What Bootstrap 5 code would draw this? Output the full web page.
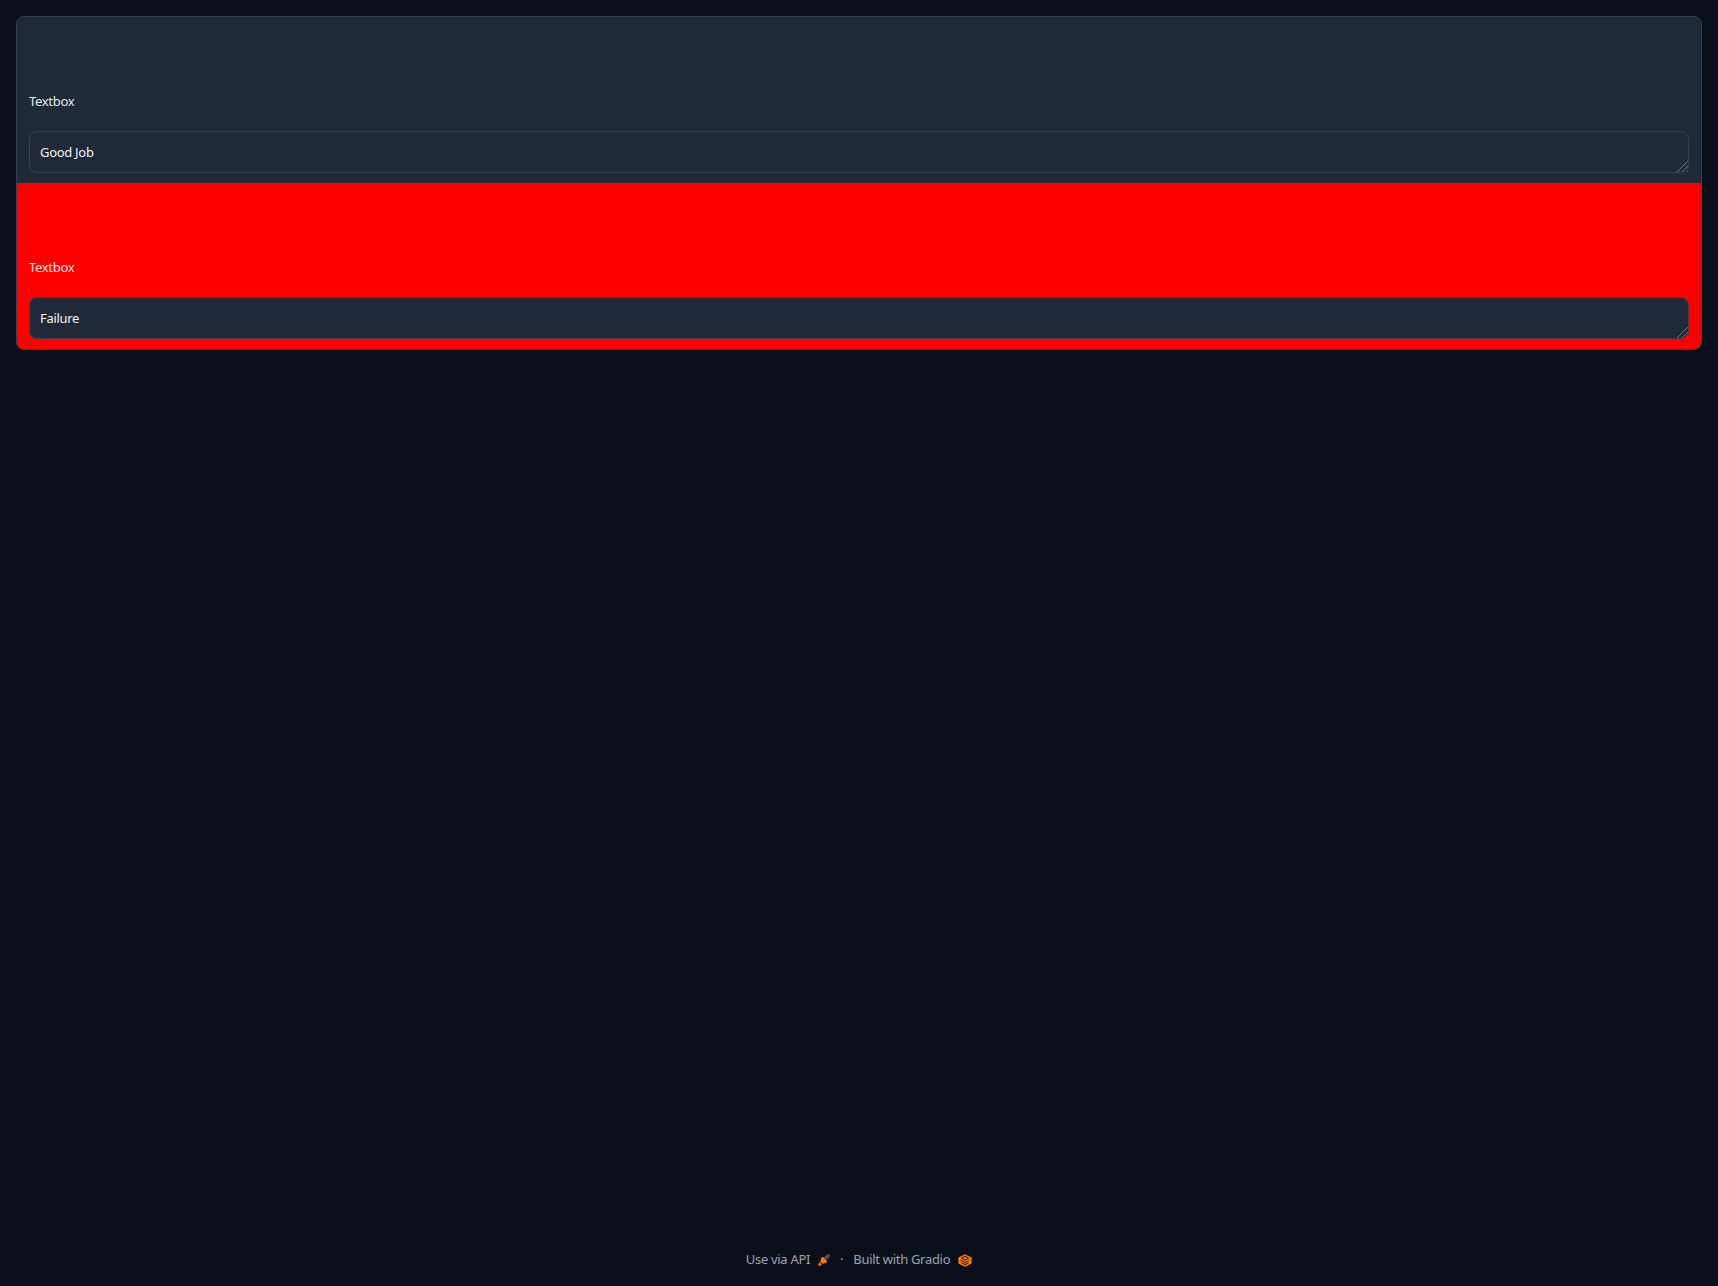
<!DOCTYPE html>
<html lang="en">
<head>
<meta charset="utf-8">
<title>Gradio</title>
<link href="https://cdn.jsdelivr.net/npm/bootstrap@5.3.0/dist/css/bootstrap.min.css" rel="stylesheet">
<style>
html,body{height:100%}
body{background:#0b0f19;font-family:"Noto Sans","Liberation Sans",sans-serif;color:#f3f4f6;font-size:13px;letter-spacing:-.3px}
.app-shell{min-height:100vh;padding:16px 16px 0}
.form-box{border:1px solid #374151;border-radius:8px;overflow:hidden;background:#1f2937}
.tb-block{padding:12px 12px 10px;height:166px;background:#1f2937;display:flex;flex-direction:column;justify-content:flex-end}
.tb-fail{background:#f00}
.tb-label{font-size:13px;line-height:20px;color:#e5e7eb;margin-bottom:20px}
.tb-fail .tb-label{color:#ffe0e0}
.tb-input{display:block;width:100%;height:42px;min-height:42px;color-scheme:dark;background:#1f2937;border:1px solid #374151;border-radius:8px;color:#f3f4f6;font-size:13px;letter-spacing:-.3px;line-height:20px;padding:10px;box-shadow:none;outline:none}
.tb-input:focus{background:#1f2937;color:#f3f4f6;border-color:#374151;box-shadow:none}
.tb-input::-webkit-resizer{background:linear-gradient(135deg,#1f2937 50%,transparent 50%),repeating-linear-gradient(135deg,transparent 0 2.5px,#6b7280 2.5px 3.5px)}
.tb-fail .tb-input::-webkit-resizer{background:linear-gradient(135deg,#1f2937 50%,transparent 50%),repeating-linear-gradient(135deg,transparent 0 2.5px,#6b7280 2.5px 3.5px)}
.foot{height:48px;color:#9ca3af;padding-bottom:4px}
.foot a{color:#9ca3af;text-decoration:none}
.dot-sep{margin:0 10px}
</style>
</head>
<body>
<div class="app-shell d-flex flex-column">
  <div class="form-box">
    <div class="tb-block">
      <label class="tb-label" for="a">Textbox</label>
      <textarea id="a" class="form-control tb-input" rows="1">Good Job</textarea>
    </div>
    <div class="tb-block tb-fail">
      <label class="tb-label" for="b">Textbox</label>
      <textarea id="b" class="form-control tb-input" rows="1">Failure</textarea>
    </div>
  </div>
  <footer class="foot mt-auto d-flex justify-content-center align-items-center">
    <a href="#" class="d-flex align-items-center gap-2">Use via API
      <svg width="12" height="12" viewBox="0 0 12 12" aria-hidden="true"><path d="M6 3.200 9.200.6c.9-.4 2-.6 2.600-.5.200.6 0 1.700-.4 2.600L8.800 6z" fill="#4b5563"/><path d="M5.200 3 9 6.800 7.800 9.600 6.500 8.700 4.800 10 2 7.200 3.300 5.500 2.400 4.200z" fill="#ff7c00"/><path d="M1.600 8 4 10.400 1.800 11.700.3 11.700.3 10.200z" fill="#ff7c00"/></svg>
    </a>
    <span class="dot-sep">·</span>
    <a href="#" class="d-flex align-items-center gap-2">Built with Gradio
      <svg width="14" height="13" viewBox="0 0 14 13" aria-hidden="true"><path d="M7 .3 13.600 3.600V9.400L7 12.700.4 9.400V3.600z" fill="#ff7c00"/><path d="M7 2.300 10.600 4.200 7 6 3.400 4.200zM2.400 6.200 7 8.500l4.600-2.300M3.600 8.900 7 10.600l3.400-1.700" fill="none" stroke="#0b0f19" stroke-width=".9"/></svg>
    </a>
  </footer>
</div>
<script src="https://cdn.jsdelivr.net/npm/bootstrap@5.3.0/dist/js/bootstrap.bundle.min.js"></script>
</body>
</html>
